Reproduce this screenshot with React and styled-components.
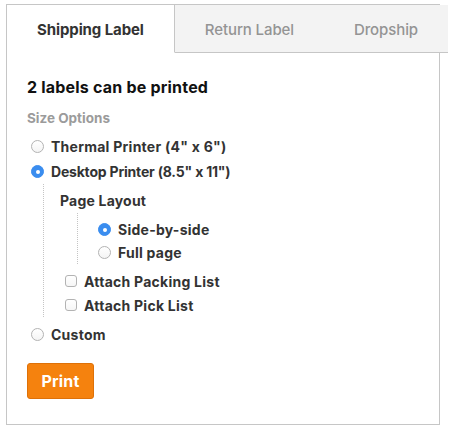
import React from "react";
import styled, { createGlobalStyle } from "styled-components";

const Global = createGlobalStyle`
  html, body { margin: 0; padding: 0; background: #fff; }
  body { font-family: Inter, "Liberation Sans", sans-serif; -webkit-font-smoothing: antialiased; font-variant-numeric: proportional-nums; }
  * { box-sizing: border-box; }
`;

const Panel = styled.div`
  margin: 4px 0 0 6px;
  width: 434px;
  height: 421px;
  border: 1px solid #c6c6c6;
  display: flex;
  flex-direction: column;
`;

const Tabs = styled.div`
  display: flex;
  height: 48px;
`;

const Tab = styled.div`
  padding: 1px 30px 0 30px;
  display: flex;
  align-items: center;
  justify-content: center;
  font-size: 15px;
  font-weight: ${(p) => (p.$active ? 700 : 500)};
  color: ${(p) => (p.$active ? "#333" : "#949494")};
  background: ${(p) => (p.$active ? "#fff" : "#f3f3f3")};
  border-bottom: 1px solid ${(p) => (p.$active ? "transparent" : "#c6c6c6")};
  border-right: ${(p) => (p.$active ? "1px solid #c6c6c6" : "none")};
  flex: ${(p) => (p.$grow ? 1 : "none")};
  letter-spacing: -0.1px;
`;

const Body = styled.div`
  padding: 24px 20px 0 20px;
  display: flex;
  flex-direction: column;
`;

const Title = styled.div`
  font-size: 16px;
  font-weight: 700;
  color: #111;
  line-height: 20px;
  letter-spacing: 0.2px;
`;

const Section = styled.div`
  margin-top: 12px;
  font-size: 13.5px;
  font-weight: 700;
  color: #9b9b9b;
  line-height: 18px;
`;

const Option = styled.label`
  display: flex;
  align-items: center;
  gap: 7px;
  height: ${(p) => p.$h || 25}px;
  font-size: 14px;
  font-weight: 700;
  color: #333;
  letter-spacing: ${(p) => p.$ls ?? 0.25}px;
  padding-left: ${(p) => p.$indent || 4}px;
  margin-top: ${(p) => p.$mt || 0}px;
`;

const Radio = styled.span`
  width: 13px;
  height: 13px;
  border-radius: 50%;
  flex: none;
  display: flex;
  align-items: center;
  justify-content: center;
  border: 1px solid ${(p) => (p.$checked ? "#3a8def" : "#b3b3b3")};
  background: ${(p) => (p.$checked ? "#3a8def" : "linear-gradient(#fff, #f4f4f4)")};
  &::after {
    content: "";
    display: ${(p) => (p.$checked ? "block" : "none")};
    width: 4px;
    height: 4px;
    border-radius: 50%;
    background: #fff;
  }
`;

const Check = styled.span`
  width: 12px;
  height: 12px;
  border-radius: 3px;
  flex: none;
  border: 1px solid #b3b3b3;
  background: linear-gradient(#fff, #f6f6f6);
`;

const Nested = styled.div`
  margin-left: ${(p) => p.$ml}px;
  border-left: 1px dotted #c4c4c4;
  display: flex;
  flex-direction: column;
  padding-top: ${(p) => p.$pt || 0}px;
`;

const SubHeading = styled.div`
  font-size: 14px;
  font-weight: 700;
  color: #333;
  letter-spacing: 0.2px;
  padding-left: 16px;
  height: 26px;
  display: flex;
  align-items: center;
`;

const PrintButton = styled.button`
  margin-top: 16px;
  align-self: flex-start;
  width: 67px;
  height: 36px;
  border-radius: 3px;
  border: 1px solid #de7108;
  background: #f5820e;
  color: #fff;
  font-family: inherit;
  font-size: 16px;
  font-weight: 700;
  letter-spacing: 0.2px;
  padding: 0;
`;

export default function App() {
  return (
    <>
      <Global />
      <Panel>
        <Tabs>
          <Tab $active>Shipping Label</Tab>
          <Tab>Return Label</Tab>
          <Tab $grow>Dropship</Tab>
        </Tabs>
        <Body>
          <Title>2 labels can be printed</Title>
          <Section>Size Options</Section>
          <Option $mt={7}>
            <Radio />
            Thermal Printer (4" x 6")
          </Option>
          <Option $ls={-0.2}>
            <Radio $checked />
            Desktop Printer (8.5" x 11")
          </Option>
          <Nested $ml={16} $pt={3}>
            <SubHeading>Page Layout</SubHeading>
            <Nested $ml={33}>
              <Option $indent={20} $h={23} $mt={5}>
                <Radio $checked />
                Side-by-side
              </Option>
              <Option $indent={20} $h={23}>
                <Radio />
                Full page
              </Option>
            </Nested>
            <Option $indent={21} $h={24} $mt={5}>
              <Check />
              Attach Packing List
            </Option>
            <Option $indent={21} $h={24}>
              <Check />
              Attach Pick List
            </Option>
          </Nested>
          <Option $mt={5}>
            <Radio />
            Custom
          </Option>
          <PrintButton>Print</PrintButton>
        </Body>
      </Panel>
    </>
  );
}
